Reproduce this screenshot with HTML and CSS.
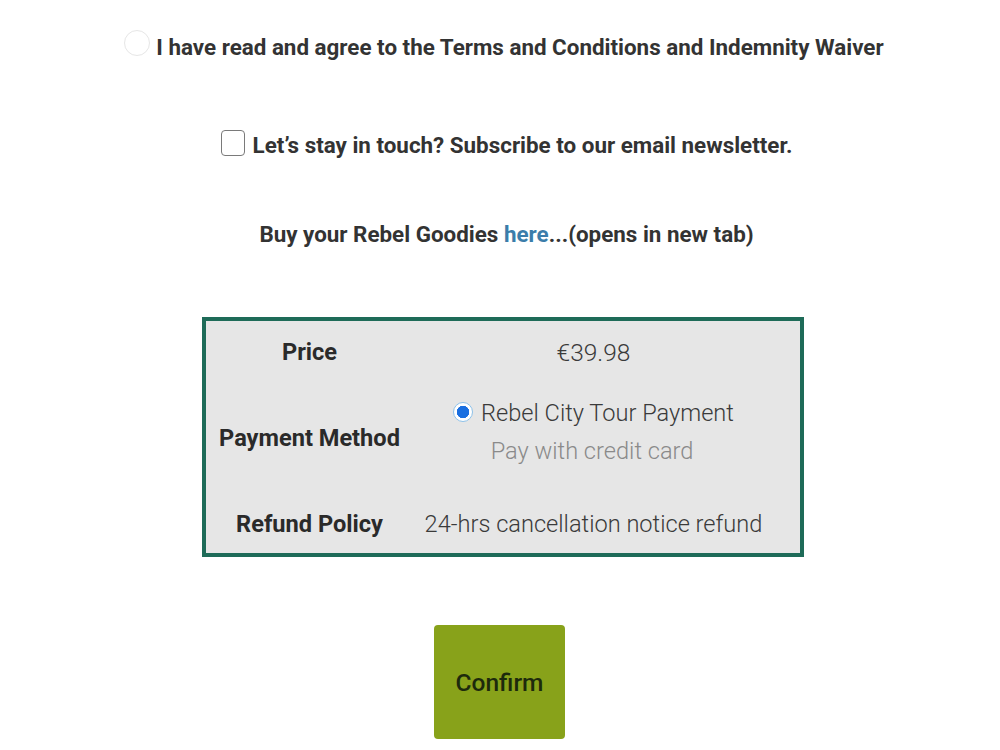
FILE: index.html
```html
<!DOCTYPE html>
<html>
<head>
<meta charset="utf-8">
<link rel="stylesheet" href="styles.css">
</head>
<body>
<main class="page">
  <label class="agree"><span class="radio-empty"></span>I have read and agree to the Terms and Conditions and Indemnity Waiver</label>
  <label class="newsletter"><span class="checkbox"></span>Let’s stay in touch? Subscribe to our email newsletter.</label>
  <p class="goodies">Buy your Rebel Goodies <a class="link" href="#">here</a>...(opens in new tab)</p>
  <section class="summary">
    <div class="grid">
      <div class="label">Price</div>
      <div class="value price">€39.98</div>
      <div class="label">Payment Method</div>
      <div class="value">
        <div class="method"><span class="radio-on"></span>Rebel City Tour Payment</div>
        <div class="method-sub">Pay with credit card</div>
      </div>
      <div class="label">Refund Policy</div>
      <div class="value">24-hrs cancellation notice refund</div>
    </div>
  </section>
  <button class="confirm">Confirm</button>
</main>
</body>
</html>
```

FILE: styles.css
```css
html, body {
  margin: 0;
  padding: 0;
  background: #ffffff;
}
body {
  font-family: Roboto, "Liberation Sans", sans-serif;
  color: #333333;
  width: 1000px;
  height: 750px;
  overflow: hidden;
}
.page {
  display: flex;
  flex-direction: column;
  align-items: center;
  padding-left: 8px;
}
.agree {
  display: flex;
  align-items: center;
  font-size: 22.4px;
  font-weight: 700;
  color: #333;
  margin-top: 31px;
  height: 32px;
}
.radio-empty {
  width: 26px;
  height: 26px;
  border: 1px solid #e6e6e6;
  border-radius: 50%;
  margin-right: 6px;
  margin-top: -8px;
  box-sizing: border-box;
}
.newsletter {
  display: flex;
  align-items: center;
  font-size: 22.4px;
  font-weight: 700;
  color: #333;
  margin-top: 66px;
  height: 32px;
  margin-left: 5px;
}
.checkbox {
  width: 24px;
  height: 26px;
  border: 1.5px solid #7a7a7a;
  border-radius: 4px;
  box-sizing: border-box;
  margin-right: 8px;
  margin-top: -4px;
}
.goodies {
  margin: 0;
  margin-top: 58px;
  margin-left: 5px;
  font-size: 22.4px;
  font-weight: 700;
  color: #333;
  height: 30px;
  line-height: 30px;
}
.link {
  color: #3b7daa;
  text-decoration: none;
}
.summary {
  margin-top: 68px;
  margin-left: -3px;
  width: 602px;
  height: 240px;
  box-sizing: border-box;
  border: 4px solid #1e6b58;
  background: #e6e6e6;
}
.grid {
  display: grid;
  grid-template-columns: 208px 360px;
  grid-template-rows: 62px 110px 62px;
}
.label {
  display: flex;
  align-items: center;
  justify-content: center;
  font-size: 23.6px;
  font-weight: 700;
  color: #2a2a2a;
}
.value {
  display: flex;
  flex-direction: column;
  align-items: center;
  justify-content: center;
  font-size: 23.6px;
  font-weight: 300;
  color: #3a3a3a;
}
.price {
  font-size: 24.5px;
}
.method {
  display: flex;
  align-items: center;
  margin-top: -12px;
}
.radio-on {
  width: 20px;
  height: 20px;
  box-sizing: border-box;
  border-radius: 50%;
  border: 1.5px solid #8ec2ea;
  background: radial-gradient(circle, #1a6fe0 0 6px, #ffffff 6.5px);
  margin-right: 8px;
  margin-top: -2px;
}
.method-sub {
  color: #8a8a8a;
  margin-top: 10px;
  margin-left: -3px;
}
.confirm {
  margin-top: 68px;
  margin-left: -9px;
  width: 131px;
  height: 114px;
  border: none;
  border-radius: 4px;
  background: #88a21a;
  color: #1d2a0c;
  font-family: Roboto, "Liberation Sans", sans-serif;
  font-size: 24.5px;
  font-weight: 500;
  padding: 0;
}
```
